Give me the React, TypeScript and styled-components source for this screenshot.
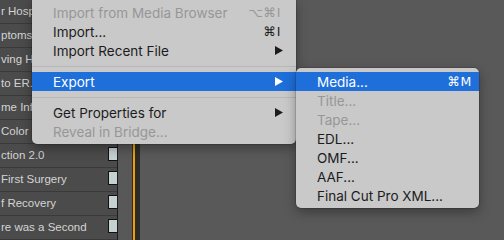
import React from "react";
import styled, { createGlobalStyle } from "styled-components";

const GlobalStyle = createGlobalStyle`
  html, body { margin: 0; padding: 0; background: #595959; }
  #root { width: 504px; height: 240px; }
`;

const Stage = styled.div`
  position: relative;
  width: 504px;
  height: 240px;
  overflow: hidden;
  background: #595959;
  display: flex;
`;

const TrackList = styled.div`
  width: 117px;
  flex-shrink: 0;
  display: flex;
  flex-direction: column;
  border-right: 1px solid #1d1d1d;
`;

const TrackRow = styled.div`
  height: 23px;
  flex-shrink: 0;
  display: flex;
  background: #4b4b4b;
  border-bottom: 1px solid #3a3a3a;
`;

const TrackName = styled.span`
  flex: 1;
  min-width: 0;
  overflow: hidden;
  white-space: nowrap;
  line-height: 23px;
  padding-left: 1px;
  font-family: "Liberation Sans", Arial, sans-serif;
  font-size: 11.5px;
  color: #d4d4d4;
`;

const TrackSwatch = styled.span`
  width: 8px;
  height: 12px;
  margin-top: 3px;
  flex-shrink: 0;
  background: #c6d1d1;
  border: 1px solid #111;
  border-right: none;
`;

const Gutter = styled.div`
  width: 14px;
  flex-shrink: 0;
  background: #585858;
`;

const PlayheadTrack = styled.div`
  width: 7px;
  flex-shrink: 0;
  background: #2b2b2b;
  display: flex;
  padding-left: 1px;
`;

const Playhead = styled.div`
  width: 2px;
  background: #f0a000;
`;

const Menu = styled.div<{ $left: number; $top: number; $width: number; $radius: string }>`
  position: absolute;
  left: ${(p) => p.$left}px;
  top: ${(p) => p.$top}px;
  width: ${(p) => p.$width}px;
  padding: 4px 0 3px;
  box-sizing: border-box;
  background: #c9c9c9;
  border-radius: ${(p) => p.$radius};
  box-shadow: 0 0 0 0.5px rgba(0, 0, 0, 0.25), 0 4px 12px rgba(0, 0, 0, 0.35);
  font-family: Inter, "Noto Sans", "DejaVu Sans", sans-serif;
  font-size: 13.5px;
`;

const Item = styled.div<{ $active?: boolean; $disabled?: boolean; $padRight: number }>`
  height: 19px;
  display: flex;
  align-items: center;
  padding: 0 ${(p) => p.$padRight}px 0 21px;
  background: ${(p) => (p.$active ? "#1e6fda" : "transparent")};
  color: ${(p) => (p.$active ? "#ffffff" : p.$disabled ? "#979797" : "#1c1c1c")};
  white-space: nowrap;
`;

const Label = styled.span`
  flex: 1;
`;

const Shortcut = styled.span`
  margin-right: 2px;
  font-family: "DejaVu Sans", Inter, sans-serif;
  font-size: 12.5px;
  letter-spacing: 0.6px;
`;

const Separator = styled.div`
  height: 12px;
  display: flex;
  align-items: center;
  &::after {
    content: "";
    flex: 1;
    height: 1px;
    background: #b7b7b7;
  }
`;

const Arrow = () => (
  <svg width="8" height="9" viewBox="0 0 8 9" style={{ display: "block" }}>
    <polygon points="0,0 8,4.5 0,9" fill="currentColor" />
  </svg>
);

const tracks = [
  "r Hosp",
  "ptoms",
  "ving H",
  "to ER.",
  "me Infu",
  "Color",
  "ction 2.0",
  "First Surgery",
  "f Recovery",
  "re was a Second",
];

export default function App() {
  return (
    <>
      <GlobalStyle />
      <Stage>
        <TrackList>
          {tracks.map((t) => (
            <TrackRow key={t}>
              <TrackName>{t}</TrackName>
              <TrackSwatch />
            </TrackRow>
          ))}
        </TrackList>
        <Gutter />
        <PlayheadTrack>
          <Playhead />
        </PlayheadTrack>

        <Menu $left={32} $top={-1} $width={264} $radius="0 0 5px 5px">
          <Item $disabled $padRight={13}>
            <Label>Import from Media Browser</Label>
            <Shortcut>⌥⌘I</Shortcut>
          </Item>
          <Item $padRight={13}>
            <Label>Import...</Label>
            <Shortcut>⌘I</Shortcut>
          </Item>
          <Item $padRight={13}>
            <Label>Import Recent File</Label>
            <Arrow />
          </Item>
          <Separator />
          <Item $active $padRight={13}>
            <Label>Export</Label>
            <Arrow />
          </Item>
          <Separator />
          <Item $padRight={13}>
            <Label>Get Properties for</Label>
            <Arrow />
          </Item>
          <Item $disabled $padRight={13}>
            <Label>Reveal in Bridge...</Label>
          </Item>
        </Menu>

        <Menu $left={296} $top={68} $width={183} $radius="5px">
          <Item $active $padRight={5}>
            <Label>Media...</Label>
            <Shortcut>⌘M</Shortcut>
          </Item>
          <Item $disabled $padRight={5}>
            <Label>Title...</Label>
          </Item>
          <Item $disabled $padRight={5}>
            <Label>Tape...</Label>
          </Item>
          <Item $padRight={5}>
            <Label>EDL...</Label>
          </Item>
          <Item $padRight={5}>
            <Label>OMF...</Label>
          </Item>
          <Item $padRight={5}>
            <Label>AAF...</Label>
          </Item>
          <Item $padRight={5}>
            <Label>Final Cut Pro XML...</Label>
          </Item>
        </Menu>
      </Stage>
    </>
  );
}
